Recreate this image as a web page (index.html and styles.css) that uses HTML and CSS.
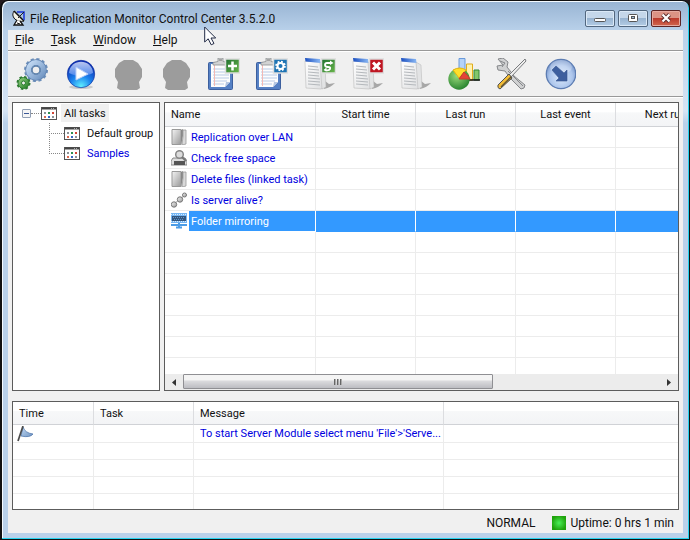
FILE: index.html
```html
<!DOCTYPE html>
<html lang="en">
<head>
<meta charset="utf-8">
<title>File Replication Monitor Control Center 3.5.2.0</title>
<link rel="stylesheet" href="styles.css">
</head>
<body>
<svg class="defs" aria-hidden="true">
  <defs>
    <linearGradient id="steel" x1="0" y1="0" x2="1" y2="1"><stop offset="0" stop-color="#c4dbf4"/><stop offset="1" stop-color="#6f94c2"/></linearGradient>
    <linearGradient id="leaf" x1="0" y1="0" x2="1" y2="1"><stop offset="0" stop-color="#9ad486"/><stop offset="1" stop-color="#1d7a22"/></linearGradient>
    <linearGradient id="badgeGreen" x1="0" y1="0" x2="1" y2="1"><stop offset="0" stop-color="#1f7030"/><stop offset="1" stop-color="#6cb84c"/></linearGradient>
    <radialGradient id="playBall" cx=".5" cy=".95" r=".85"><stop offset="0" stop-color="#5ff0ff"/><stop offset=".45" stop-color="#1c84ee"/><stop offset="1" stop-color="#0a2bb0"/></radialGradient>
    <linearGradient id="gloss" x1="0" y1="0" x2="0" y2="1"><stop offset="0" stop-color="#e6eeff"/><stop offset="1" stop-color="#5a8cf0"/></linearGradient>
    <radialGradient id="pie" cx=".4" cy=".35" r=".7"><stop offset="0" stop-color="#9bdc7c"/><stop offset="1" stop-color="#23802c"/></radialGradient>
    <radialGradient id="disc" cx=".5" cy=".6" r=".55"><stop offset="0" stop-color="#dceafd"/><stop offset=".7" stop-color="#adc6ec"/><stop offset="1" stop-color="#7f9dd0"/></radialGradient>
    <linearGradient id="paper" x1="0" y1="0" x2="1" y2="1"><stop offset="0" stop-color="#fff"/><stop offset="1" stop-color="#dcdddf"/></linearGradient>
    <linearGradient id="blueBar" x1="0" y1="0" x2="1" y2="0"><stop offset="0" stop-color="#1b4fc0"/><stop offset="1" stop-color="#8ab8f4"/></linearGradient>
    <linearGradient id="grey" x1="0" y1="0" x2="1" y2="1"><stop offset="0" stop-color="#f4f4f4"/><stop offset="1" stop-color="#999"/></linearGradient>
    <symbol id="clipboard" viewBox="0 0 32 32">
      <rect x="0.5" y="4.5" width="24" height="27" rx="1" fill="#5580c4" stroke="#3c5f9e"/>
      <path d="M3 6h19v18l-5 5H3z" fill="#fdfdfd"/>
      <path d="M5 11h16M5 14h16M5 17h16M5 20h16M5 23h14M5 26h11" stroke="#b9cbe6" fill="none"/>
      <path d="M6.5 7v21" stroke="#f3b9b4"/>
      <path d="M22 24l-5 5 1-5z" fill="#b6c7e2"/>
      <path d="M5 7V4.500l5-1V0h5v3.500l5 1V7z" fill="#d2d3d3" stroke="#8c8f92" stroke-width=".8"/>
      <path d="M11 2h3" stroke="#777"/>
    </symbol>
    <symbol id="sheet" viewBox="0 0 32 32">
      <path d="M20 31c5-1 8-3 11-6l-6 1-4-3z" fill="#777" opacity=".6"/>
      <path d="M1 3l15 1 5 25-4 2-15-1z" fill="url(#paper)" stroke="#bbb" stroke-width=".6"/>
      <path d="M16 4l5 3 1 22-4 2z" fill="#e2e3e4" stroke="#b5b5b5" stroke-width=".5"/>
      <path d="M1 0l15 1 .5 4L1.500 3.500z" fill="url(#blueBar)"/>
      <path d="M4 8l10 1M4 11l11 1M4 14l11 1M4 17l11 1M4 20l12 1M4 23l12 1M4 26l12 1" stroke="#b4b8bc" fill="none"/>
    </symbol>
    <symbol id="silhouette" viewBox="0 0 32 32">
      <path d="M12 2h9l5 3 4 6v8l-3 5 1 6-3 2H8l-3-2 1-6-3-5v-8l4-6z" fill="#9c9c9c"/>
    </symbol>
    <symbol id="group" viewBox="0 0 16 13">
      <rect x=".5" y=".5" width="15" height="12" fill="#fff" stroke="#555"/>
      <path d="M1 1.500h14" stroke="#444" stroke-width="2"/><path d="M10 1.500h4" stroke="#aaa" stroke-dasharray="1 1"/>
      <path d="M3 5h2v2H3zM11 9h2v2h-2z" fill="#8b9298"/><path d="M7 5h2v2H7z" fill="#2f9150"/><path d="M11 5h2v2h-2z" fill="#d34436"/><path d="M3 9h2v2H3z" fill="#db6a50"/><path d="M7 9h2v2H7z" fill="#3566c2"/>
    </symbol>
    <symbol id="folder" viewBox="0 0 16 16">
      <path d="M1 .5h9v15H1z" fill="url(#grey)" stroke="#999"/><path d="M10 1l2-1v7l-2 9z" fill="#888"/><path d="M12 1h3v14l-4 1 1-9z" fill="#d9d9d9" stroke="#999" stroke-width=".8"/>
    </symbol>
  </defs>
</svg>
<div class="window">
  <header class="titlebar">
    <svg class="app-icon" viewBox="0 0 14 16"><path d="M2 1l10 10c-3 1-8 0-10-3s-1-5 0-7z" fill="#f3f3e8" stroke="#111"/><path d="M2 1l10 10" stroke="#111" stroke-width="1.500"/><path d="M5 2h7v8" fill="none" stroke="#1733d8" stroke-width="1.500"/><path d="M12 2L6 8" stroke="#222"/><path d="M5 10l-3 5h9l-3-4" fill="#fff" stroke="#111" stroke-width="1.300"/><path d="M5 13l3 1" stroke="#111"/></svg>
    <h1 class="title">File Replication Monitor Control Center 3.5.2.0</h1>
    <div class="caption-buttons">
      <button class="caption" aria-label="Minimize"><svg viewBox="0 0 12 10"><rect x=".5" y="5.500" width="11" height="3" rx="1" fill="#fff" stroke="#555"/></svg></button>
      <button class="caption" aria-label="Maximize"><svg viewBox="0 0 12 10"><rect x="1.500" y="1.500" width="9" height="7" rx="1" fill="#fff" stroke="#555"/><rect x="4.500" y="3.500" width="3" height="2" fill="#9bbad9" stroke="#555"/></svg></button>
      <button class="caption close" aria-label="Close"><svg viewBox="0 0 12 10"><path d="M2.500 1.500l7 7M9.500 1.500l-7 7" stroke="#5b2d2d" stroke-width="4"/><path d="M2.500 1.500l7 7M9.500 1.500l-7 7" stroke="#fff" stroke-width="2.200"/></svg></button>
    </div>
  </header>
  <div class="client">
    <nav class="menubar">
      <a href="#file"><u>F</u>ile</a><a href="#task"><u>T</u>ask</a><a href="#window"><u>W</u>indow</a><a href="#help"><u>H</u>elp</a>
    </nav>
    <div class="toolbar">
      <button aria-label="Server settings"><svg viewBox="0 0 32 32"><circle cx="20" cy="12" r="10.500" fill="none" stroke="#6c8fba" stroke-width="3" stroke-dasharray="3 2.500"/><circle cx="20" cy="12" r="7.500" fill="none" stroke="#6285b3" stroke-width="6.500"/><circle cx="20" cy="12" r="7.500" fill="none" stroke="url(#steel)" stroke-width="5"/><circle cx="20" cy="12" r="4" fill="#efefef" stroke="#5c80ab" stroke-width="1.500"/><circle cx="7.500" cy="25" r="6" fill="none" stroke="#2b7a2f" stroke-width="2" stroke-dasharray="2.500 2.200"/><circle cx="7.500" cy="25" r="5.500" fill="url(#leaf)" stroke="#2d7d30"/><circle cx="7.500" cy="25" r="2" fill="#efefef" stroke="#2d7d30"/></svg></button>
      <button aria-label="Run"><svg viewBox="0 0 32 32"><ellipse cx="17" cy="29" rx="12" ry="2" fill="#888" opacity=".35"/><circle cx="17" cy="16" r="13.700" fill="url(#playBall)" stroke="#1537a0" stroke-width=".7"/><path d="M5 15C6 0 28 0 29 15c-7 4-17 4-24 0z" fill="url(#gloss)" opacity=".8"/><path d="M12 9v13l12-6z" fill="#fff" stroke="#b8cdf7"/></svg></button>
      <button aria-label="Stop" disabled><svg><use href="#silhouette"/></svg></button>
      <button aria-label="Pause" disabled><svg><use href="#silhouette"/></svg></button>
      <button aria-label="New task"><svg viewBox="0 0 32 32"><use href="#clipboard" width="32" height="32"/><rect x="17.500" y="1" width="14" height="14" fill="url(#badgeGreen)" stroke="#ddd" stroke-width="1.500"/><path d="M24.500 3.500v9M20 8h9" stroke="#fff" stroke-width="2.500"/></svg></button>
      <button aria-label="Edit task"><svg viewBox="0 0 32 32"><use href="#clipboard" width="32" height="32"/><rect x="17.500" y="1" width="14" height="14" fill="#1e74b4" stroke="#ddd" stroke-width="1.500"/><circle cx="24.500" cy="8" r="3" fill="none" stroke="#fff" stroke-width="2"/><circle cx="24.500" cy="8" r="4.400" fill="none" stroke="#fff" stroke-width="1.800" stroke-dasharray="1.800 1.650"/></svg></button>
      <button aria-label="Restart task"><svg viewBox="0 0 32 32"><use href="#sheet" width="32" height="32"/><rect x="17.500" y="1" width="14" height="14" fill="url(#badgeGreen)" stroke="#ddd" stroke-width="1.500"/><path d="M28 5h-5q-2 0-2 2t3 2q3 0 2 2t-5 1" fill="none" stroke="#fff" stroke-width="1.800"/><path d="M26 2.500l3.500 2.500-3.500 2zM22.500 9.500L19.500 12l3 1.800z" fill="#fff"/></svg></button>
      <button aria-label="Delete task"><svg viewBox="0 0 32 32"><use href="#sheet" width="32" height="32"/><rect x="17.500" y="1" width="14" height="14" fill="#bf1622" stroke="#ddd" stroke-width="1.500"/><path d="M21 4.500l7 7M28 4.500l-7 7" stroke="#fff" stroke-width="3"/></svg></button>
      <button aria-label="Task log"><svg viewBox="0 0 32 32"><use href="#sheet" width="32" height="32"/></svg></button>
      <button aria-label="Statistics"><svg viewBox="0 0 32 32"><path d="M11 .5h6v21h-6z" fill="#b4d2f8" stroke="#6a9ada"/><path d="M18.500 6h6v16h-6z" fill="#fff2ae" stroke="#e0ac1a"/><path d="M26 12h5v10h-5z" fill="#83c76a" stroke="#338735"/><path d="M18 22h14" stroke="#111" stroke-width="1.500"/><circle cx="11" cy="21" r="10.700" fill="url(#pie)"/><path d="M11 20L5 12q7-4 13 0z" fill="#ffdf2b" stroke="#e8b40f"/><path d="M11 21l5-7q4 3 6 7z" fill="#e34437" stroke="#c43c2c"/></svg></button>
      <button aria-label="Options"><svg viewBox="0 0 32 32"><path d="M2 1l5-1 5 4-1 5 4 5 3 4 11 9q0 4-4 4L14 20l-5-7-7-1-1-4 6-1z" fill="#d0d1d2" stroke="#85878a"/><path d="M4 3l5 2-3 4M12 13l15 15" stroke="#85878a" fill="none"/><path d="M29 1L13 17l2 2L30 3z" fill="#eee" stroke="#77797c"/><path d="M13 16L2 27q-1 3 2 4l12-11z" fill="#f1bb35" stroke="#525252"/><path d="M15 19L5 29" stroke="#625434" stroke-width="1.500"/></svg></button>
      <button aria-label="Hide to tray"><svg viewBox="0 0 32 32"><circle cx="17" cy="16" r="14.700" fill="url(#disc)" stroke="#5d7db2" stroke-width="1.300"/><ellipse cx="17" cy="9" rx="11" ry="7" fill="#fff" opacity=".25"/><path d="M8 12l4-4 8 7 3-3v11H12l3-3z" fill="#3e5f9e" stroke="#36558e" stroke-width=".6"/></svg></button>
    </div>
    <main class="workspace">
      <div class="panes">
        <aside class="pane tree">
          <ul>
            <li><div class="node root"><button class="expander" aria-label="Collapse All tasks"></button><span class="dots"></span><svg class="group-icon"><use href="#group"/></svg><span class="label selected">All tasks</span></div>
              <ul class="children">
                <li class="node"><span class="dots"></span><svg class="group-icon"><use href="#group"/></svg><span class="label">Default group</span></li>
                <li class="node"><span class="dots"></span><svg class="group-icon"><use href="#group"/></svg><span class="label blue">Samples</span></li>
              </ul>
            </li>
          </ul>
        </aside>
        <section class="pane list">
          <div class="viewport">
            <table class="tasks">
              <colgroup><col class="name"><col><col><col><col></colgroup>
              <thead><tr><th>Name</th><th>Start time</th><th>Last run</th><th>Last event</th><th>Next run</th></tr></thead>
              <tbody>
                <tr><td><div class="item"><svg viewBox="0 0 16 16"><use href="#folder"/></svg><span>Replication over LAN</span></div></td><td></td><td></td><td></td><td></td></tr>
                <tr><td><div class="item"><svg viewBox="0 0 16 16"><path d="M2 8h12l2 3v4H0v-4z" fill="#ddd" stroke="#888"/><path d="M3 11h11v4H3z" fill="#555"/><circle cx="8.500" cy="4.500" r="3.800" fill="#ddd" stroke="#888" stroke-width="1.500"/><path d="M11 7l4 4" stroke="#777" stroke-width="2"/></svg><span>Check free space</span></div></td><td></td><td></td><td></td><td></td></tr>
                <tr><td><div class="item"><svg viewBox="0 0 16 16"><use href="#folder"/></svg><span>Delete files (linked task)</span></div></td><td></td><td></td><td></td><td></td></tr>
                <tr><td><div class="item"><svg viewBox="0 0 16 16"><path d="M3 12L14 3" stroke="#999"/><circle cx="3" cy="12.500" r="2.700" fill="url(#grey)" stroke="#777"/><circle cx="9" cy="7.500" r="2.700" fill="url(#grey)" stroke="#777"/><circle cx="13.500" cy="3" r="2" fill="url(#grey)" stroke="#777"/></svg><span>Is server alive?</span></div></td><td></td><td></td><td></td><td></td></tr>
                <tr class="active"><td><div class="item"><svg viewBox="0 0 16 16"><path d="M0 0h16v10H0z" fill="#73b5f3"/><path d="M0 1.500h16M0 8.500h16" stroke="#d8ecff" stroke-dasharray="1 1"/><path d="M1 3h14v5H1z" fill="#34567d"/><path d="M2 4.500h12M3 6.500h10" stroke="#5c95cf" stroke-dasharray="1 1"/><path d="M0 12h16M8 10v5M5 14.500h6" stroke="#4c9ce6" stroke-width="2"/></svg><span>Folder mirroring</span></div></td><td></td><td></td><td></td><td></td></tr>
                <tr><td></td><td></td><td></td><td></td><td></td></tr>
                <tr><td></td><td></td><td></td><td></td><td></td></tr>
                <tr><td></td><td></td><td></td><td></td><td></td></tr>
                <tr><td></td><td></td><td></td><td></td><td></td></tr>
                <tr><td></td><td></td><td></td><td></td><td></td></tr>
                <tr><td></td><td></td><td></td><td></td><td></td></tr>
                <tr><td></td><td></td><td></td><td></td><td></td></tr>
              </tbody>
            </table>
          </div>
          <div class="scrollbar">
            <button class="arrow" aria-label="Scroll left"><svg viewBox="0 0 4 7"><path d="M4 0v7L0 3.500z" fill="#333"/></svg></button>
            <div class="track"><div class="thumb"><i></i><i></i><i></i></div></div>
            <button class="arrow" aria-label="Scroll right"><svg viewBox="0 0 4 7"><path d="M0 0v7l4-3.500z" fill="#333"/></svg></button>
          </div>
        </section>
      </div>
      <section class="pane log">
        <table class="messages">
          <colgroup><col class="time"><col class="task"><col class="message"><col></colgroup>
          <thead><tr><th>Time</th><th>Task</th><th>Message</th><th></th></tr></thead>
          <tbody>
            <tr><td><svg class="flag" viewBox="0 0 16 16"><path d="M6 1q2 6 10 7-3 4-12 2z" fill="url(#steel)" stroke="#456fa7" stroke-width=".7"/><path d="M6 0L1 15" stroke="#4b4b4b" stroke-width="1.700"/></svg></td><td></td><td>To start Server Module select menu 'File'&gt;'Serve...</td><td></td></tr>
            <tr><td></td><td></td><td></td><td></td></tr>
            <tr><td></td><td></td><td></td><td></td></tr>
            <tr><td></td><td></td><td></td><td></td></tr>
            <tr><td></td><td></td><td></td><td></td></tr>
          </tbody>
        </table>
      </section>
    </main>
    <footer class="status"><span>NORMAL</span><span class="uptime"><span class="led"></span>Uptime: 0 hrs 1 min</span></footer>
  </div>
  <svg class="pointer" viewBox="0 0 13 20"><path d="M.7 1v15l3.500-3.200 3 6 2.800-1.300-3-5.500h4.700z" fill="#fff" stroke="#222a45"/></svg>
</div>
</body>
</html>
```

FILE: styles.css
```css
* { box-sizing: border-box; }
html, body { height: 100%; margin: 0; }
body { background: #241c20; font: 12px/16px Roboto, sans-serif; color: #111; }
button { margin: 0; padding: 0; border: 0; background: none; font: inherit; }
svg { display: block; }
.defs { position: absolute; width: 0; height: 0; }

.window {
  position: relative;
  display: flex;
  flex-direction: column;
  height: 100%;
  padding: 0 5px 5px;
  border: 1px solid #111;
  border-radius: 8px 8px 0 0;
  background: linear-gradient(#98b4d3, #b9d1ea 30px, #d5e4f4 110px, #b9d1ea 122px);
  box-shadow: inset -1px -1px #25d3ef, inset 1px 1px #f4faff;
  border-width: 1px 1px 1px 2px;
}
.titlebar { display: flex; align-items: center; height: 29px; padding: 5px 3px 0 5px; }
.app-icon { width: 14px; height: 16px; }
.title { flex: 1; margin: 0 0 0 4px; padding-top: 2px; font: 12px/16px Roboto, sans-serif; white-space: nowrap; }
.caption-buttons { display: flex; gap: 3px; }
.caption {
  display: grid;
  place-items: center;
  width: 30px;
  height: 17px;
  border: 1px solid #52677f;
  border-radius: 2px;
  background: linear-gradient(#c5d7ea 0 48%, #98b4d1 50%, #b3cce5);
  box-shadow: inset 0 0 0 1px #dbe9f7;
}
.caption svg { width: 12px; height: 10px; }
.close { border-color: #5d2525; background: linear-gradient(#dc9385 0 45%, #bc3b2d 50%, #d1664e); box-shadow: inset 0 0 0 1px #e6aaa0; }

.client { flex: 1; min-height: 0; display: flex; flex-direction: column; margin: 0 1px 1px; background: #f0f0f0; }
.menubar { display: flex; gap: 17px; height: 21px; padding: 2px 7px; border-bottom: 1px solid #999; }
.menubar a { color: #111; text-decoration: none; }
.toolbar { display: flex; height: 46px; border-top: 1px solid #fff; border-bottom: 1px solid #999; }
.toolbar button { display: grid; place-items: center; width: 48px; }
.toolbar svg { width: 32px; height: 32px; }

.workspace { flex: 1; min-height: 0; display: flex; flex-direction: column; gap: 10px; padding: 4px; border-top: 1px solid #fff; font-size: 11px; }
.panes { flex: 1; min-height: 0; display: flex; gap: 4px; }
.pane { border: 1px solid #5c5c5c; background: #fff; overflow: hidden; }

.tree { width: 148px; padding: 0 0 0 9px; }
.tree ul { margin: 0; padding: 0; list-style: none; }
.node { display: flex; align-items: center; height: 20px; }
.expander { width: 9px; height: 9px; border: 1px solid #919fb5; border-radius: 1px; background: linear-gradient(#3b5998, #3b5998) center / 5px 1px no-repeat #f5f5f5; }
.dots { width: 10px; border-top: 1px dotted #888; }
.group-icon { width: 16px; height: 13px; }
.tree .children { margin-left: 27px; background: repeating-linear-gradient(#888 0 1px, transparent 1px 2px) 0 0 / 1px 30px no-repeat; }
.children .dots { width: 15px; }
.label { margin-left: 4px; padding: 2px 3px 0; white-space: nowrap; }
.selected { background: #f0f0f0; }
.blue { color: #00d; }

.list { flex: 1; min-width: 0; display: flex; flex-direction: column; }
.viewport { flex: 1; min-height: 0; overflow: hidden; }
table { table-layout: fixed; border-collapse: separate; border-spacing: 0; }
th { height: 23px; padding: 2px 6px 0; border-right: 1px solid #dcdde0; border-bottom: 1px solid #d0d2d6; background: linear-gradient(#fff 0 40%, #f7f8f9 42%, #f3f4f6); font-weight: 400; white-space: nowrap; }
td { padding: 0; border-right: 1px solid #ececec; border-bottom: 1px solid #ececec; color: #0000e0; white-space: nowrap; }
.tasks { width: 551px; }
.tasks col { width: 100px; }
.tasks col.name { width: 151px; }
.tasks th { height: 24px; padding-top: 0; }
.tasks th:first-child { text-align: left; }
.tasks td { height: 21px; }
.item { display: flex; align-items: center; height: 20px; padding-left: 6px; }
.item svg { width: 16px; height: 16px; }
.item span { flex: 1; padding: 2px 4px 0; }
.active td { background: #3399ff; color: #fff; border-right-color: #fff; border-bottom-color: #3399ff; }
.active td:first-child { background: linear-gradient(#fff, #fff) 0 0 / 24px 100% no-repeat #3399ff; border-bottom-color: #fff; }

.scrollbar { display: flex; height: 16px; background: #ececec; }
.arrow { display: grid; place-items: center; width: 18px; }
.arrow svg { width: 4px; height: 7px; }
.track { flex: 1; }
.thumb { display: flex; align-items: center; justify-content: center; gap: 1px; width: 65%; height: 15px; border: 1px solid #8f8f93; border-radius: 1px; background: linear-gradient(#f4f4f4 0 35%, #d9d9dc 50%, #bcbdc2); }
.thumb i { width: 2px; height: 6px; background: #666; border-right: 1px solid #aaa; }

.log { height: 109px; }
.messages { width: 100%; }
.messages .time { width: 81px; }
.messages .task { width: 100px; }
.messages .message { width: 250px; }
.messages th { text-align: left; }
.messages th:last-child, .messages td:last-child { border-right: 0; }
.messages td { height: 17px; padding: 0 6px; overflow: hidden; }
.messages tr:first-child td { height: 18px; padding-top: 1px; }
.messages td:first-child { padding: 0 4px; }
.flag { width: 16px; height: 16px; }

.status { display: flex; justify-content: flex-end; gap: 16px; height: 19px; padding: 1px 9px 2px; }
.uptime { display: flex; align-items: center; gap: 5px; }
.led { width: 14px; height: 14px; background: radial-gradient(#4aef57, #1fa20b 75%); }
.pointer { position: absolute; left: 202px; top: 25px; width: 13px; height: 20px; }
```
